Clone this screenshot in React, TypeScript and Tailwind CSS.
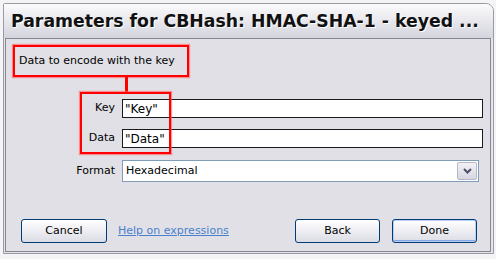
import React from "react"

export default function App() {
  return (
    <div className="w-[496px] h-[259px] bg-[#f4f4f6] overflow-hidden pt-[3px] pl-[3px] font-['DejaVu_Sans',sans-serif] text-black">
      <div className="w-[491px] h-[251px] flex flex-col border border-[#9a9aa4] rounded-tr-[8px] rounded-tl-[2px] bg-[#e4e4ea]">
        {/* Title bar */}
        <div className="h-[34px] shrink-0 flex items-center pl-[7px] pt-[1px] rounded-tr-[7px] bg-gradient-to-b from-[#fbfbfc] to-[#d4d4de]">
          <span className="text-[17.3px] font-bold leading-none text-[#111] [text-shadow:1px_1px_0_#ffffff] whitespace-nowrap">
            Parameters for CBHash: HMAC-SHA-1 - keyed ...
          </span>
        </div>

        {/* Panel */}
        <div className="relative flex-1 ml-[1px] mr-[2px] mb-[1px] border border-[#86868f] bg-[#e1e0e6] flex flex-col">
          <div className="mt-[6px] ml-[7px] w-[176px] h-[32px] flex items-center pl-[4px] text-[11px] border-2 border-[#ff0000] shadow-[0_0_1px_1px_rgba(255,90,90,0.6)]">
            Data to encode with the key
          </div>

          <div className="mt-[22px] flex flex-col gap-[11px] text-[11px]">
            <div className="flex items-center gap-[7px]">
              <span className="w-[109px] text-right">Key</span>
              <div className="w-[361px] h-[19px] bg-white border border-[#1a1a1a] flex items-center pl-[2px] text-[12px]">"Key"</div>
            </div>
            <div className="flex items-center gap-[7px]">
              <span className="w-[109px] text-right">Data</span>
              <div className="w-[361px] h-[19px] bg-white border border-[#1a1a1a] flex items-center pl-[2px] text-[12px]">"Data"</div>
            </div>
            <div className="flex items-center gap-[7px] mt-[1px]">
              <span className="w-[109px] text-right">Format</span>
              <div className="w-[357px] h-[22px] bg-white border border-[#7f9db9] flex items-center justify-between pl-[3px] pr-[1px]">
                <span>Hexadecimal</span>
                <div className="w-[20px] h-[18px] flex items-center justify-center rounded-[2px] border border-[#b4b8c8] bg-gradient-to-b from-[#f2f2f6] to-[#d6d6e0]">
                  <svg width="9" height="6" viewBox="0 0 9 6">
                    <path d="M1 1 L4.5 4.5 L8 1" fill="none" stroke="#4d5168" strokeWidth="2" />
                  </svg>
                </div>
              </div>
            </div>
          </div>

          <div className="mt-[37px] flex items-center text-[11px]">
            <button className="ml-[15px] w-[86px] h-[24px] rounded-[3px] border border-[#003c74] bg-gradient-to-b from-white to-[#dcdce6]">
              Cancel
            </button>
            <span className="ml-[11px] text-[#4a80cc] underline">Help on expressions</span>
            <button className="ml-auto w-[85px] h-[24px] rounded-[3px] border border-[#003c74] bg-gradient-to-b from-white to-[#dcdce6]">
              Back
            </button>
            <button className="ml-[12px] mr-[13px] w-[85px] h-[24px] rounded-[3px] border border-[#003c74] bg-gradient-to-b from-white to-[#dcdce6] shadow-[inset_0_0_0_1px_#b8cef2,inset_0_-2px_0_#84a6e4]">
              Done
            </button>
          </div>

          {/* annotation overlays */}
          <div className="absolute left-[119px] top-[37px] w-[3px] h-[16px] bg-[#ff0000]" />
          <div className="absolute left-[74px] top-[53px] w-[91px] h-[62px] border-2 border-[#ff0000] shadow-[0_0_1px_1px_rgba(255,90,90,0.6)]" />
        </div>
      </div>
    </div>
  )
}
